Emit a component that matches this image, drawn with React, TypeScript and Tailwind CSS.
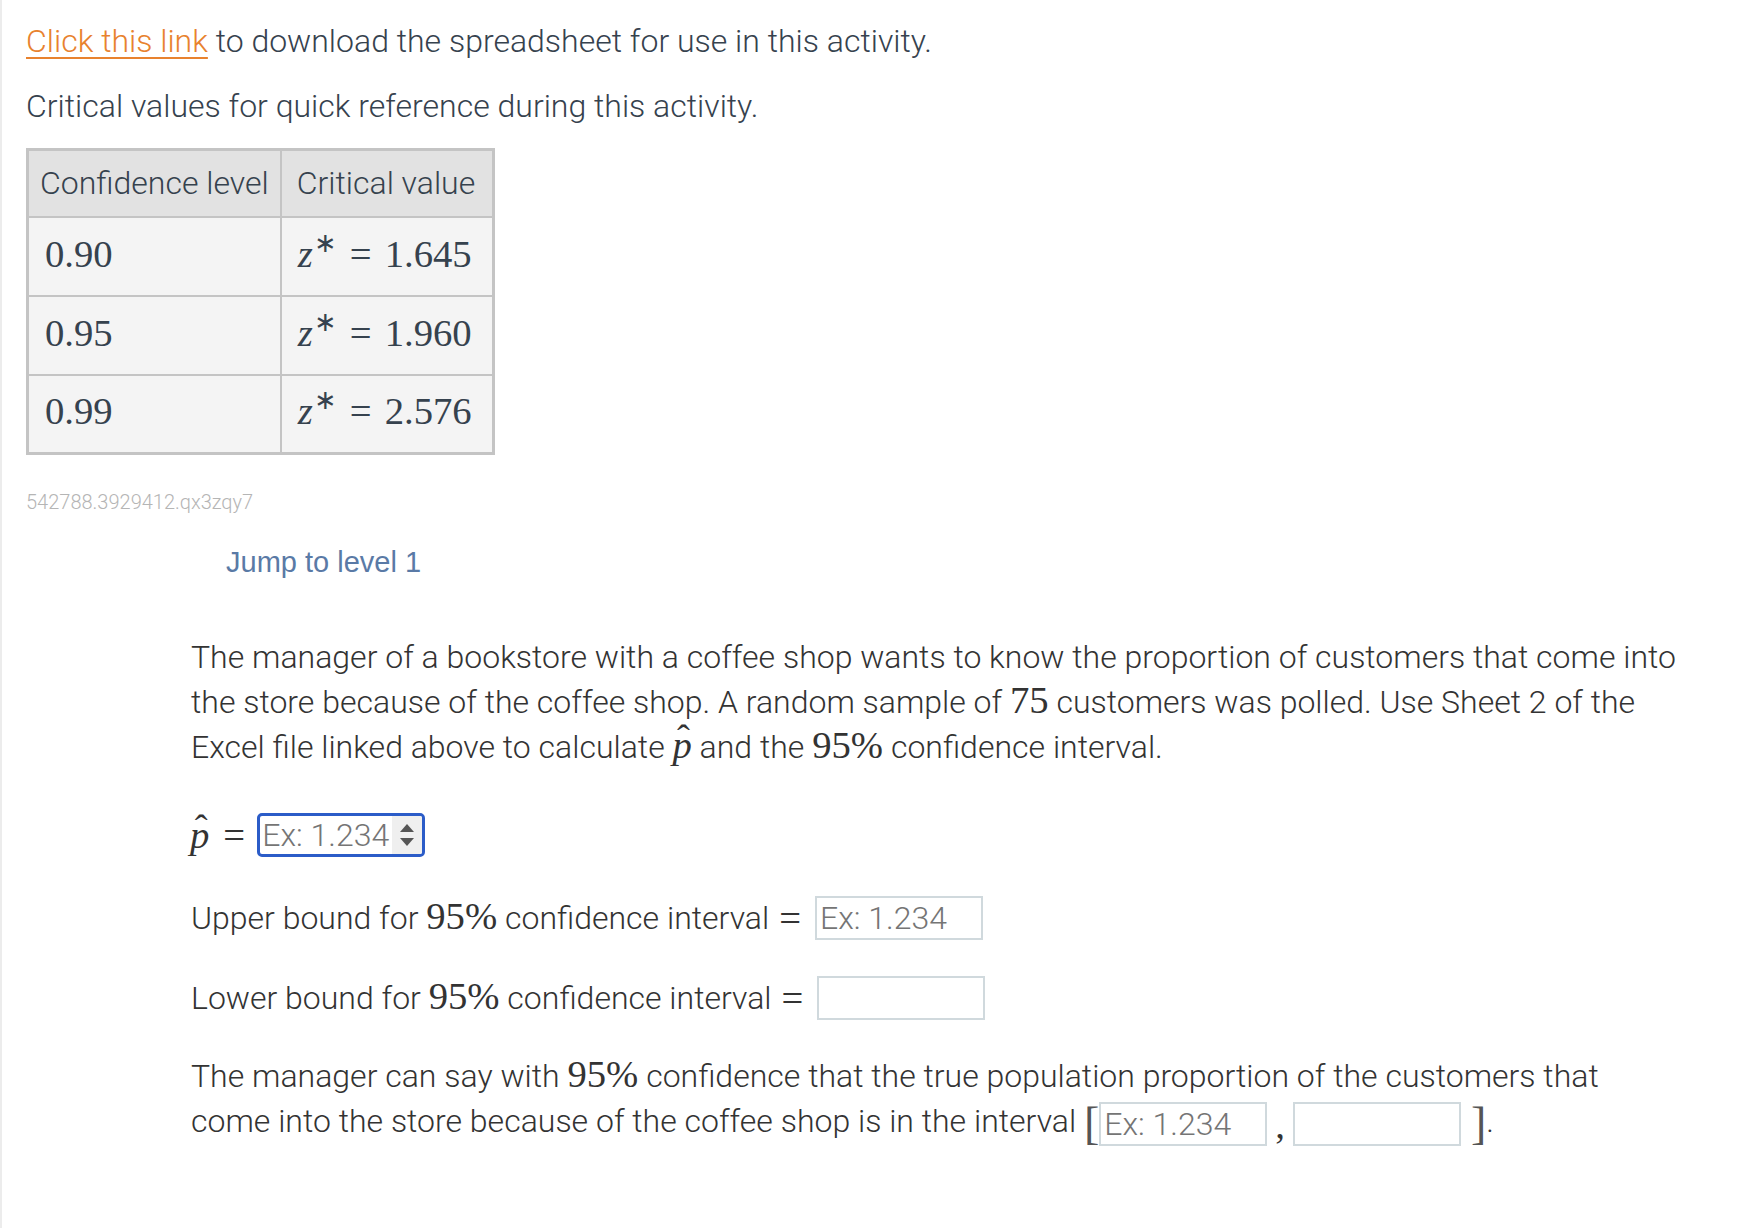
import React from 'react';

// Math pieces are set in a serif face, about 1.21x the body size (KaTeX style)
const M: React.FC<{ children: React.ReactNode; className?: string }> = ({ children, className = '' }) => (
  <span className={`font-['Liberation_Serif','Times_New_Roman',serif] text-[38.7px] font-normal leading-none ${className}`}>{children}</span>
);

const PHat = () => (
  <span className="relative inline-block italic">
    p
    <span className="absolute left-[0.12em] top-[-0.18em] not-italic">ˆ</span>
  </span>
);

const ZStar = () => (
  <span className="italic">
    z<sup className="not-italic text-[0.7em] top-[-0.55em] ml-[1px]">∗</sup>
  </span>
);

const rows = [
  { level: '0.90', value: '1.645' },
  { level: '0.95', value: '1.960' },
  { level: '0.99', value: '2.576' },
];

const Box: React.FC<{ placeholder?: string; className?: string }> = ({ placeholder = '', className = '' }) => (
  <input
    readOnly
    placeholder={placeholder}
    className={`inline-block align-middle h-[44px] w-[168px] border-2 border-[#d0d9dd] bg-white px-[3px] text-[32px] leading-[40px] text-[#333] placeholder:text-[#757575] outline-none ${className}`}
  />
);

export default function App() {
  return (
    <div className="min-h-screen bg-white border-l-2 border-[#ececec] pl-[24px] pt-[19px] pb-10 font-['Roboto',sans-serif] text-[32px] font-light leading-[45px] text-[#36424e]">
      <p>
        <a className="text-[#e8822e] underline decoration-2 underline-offset-[5px]">Click this link</a> to download the
        spreadsheet for use in this activity.
      </p>
      <p className="mt-[20px]">Critical values for quick reference during this activity.</p>

      <table className="mt-[19px] border-collapse border-[3px] border-[#c4c4c4]">
        <thead>
          <tr className="bg-[#e2e2e2]">
            <th className="h-[67px] w-[251px] border-2 border-[#c4c4c4] px-[11px] text-left font-light whitespace-nowrap">
              Confidence level
            </th>
            <th className="h-[67px] w-[213px] border-2 border-[#c4c4c4] px-[15px] text-left font-light whitespace-nowrap">
              Critical value
            </th>
          </tr>
        </thead>
        <tbody>
          {rows.map(r => (
            <tr key={r.level} className="bg-[#f4f4f4]">
              <td className="h-[79px] border-2 border-[#c4c4c4] px-[16px]">
                <M>{r.level}</M>
              </td>
              <td className="h-[79px] border-2 border-[#c4c4c4] px-[16px] whitespace-nowrap">
                <M>
                  <ZStar />
                  <span className="mx-[13px]">=</span>
                  {r.value}
                </M>
              </td>
            </tr>
          ))}
        </tbody>
      </table>

      <div className="mt-[33px] text-[20px] leading-[28px] text-[#b5b5b5]">542788.3929412.qx3zqy7</div>

      <div className="mt-[28px] ml-[200px] font-['Liberation_Sans',Arial,sans-serif] text-[29px] font-normal leading-[36px] text-[#5a7aa6]">
        Jump to level 1
      </div>

      <div className="mt-[55px] ml-[165px] text-[#333]">
        <p className="whitespace-nowrap">
          The manager of a bookstore with a coffee shop wants to know the proportion of customers that come into
          <br />
          the store because of the coffee shop. A random sample of <M>75</M> customers was polled. Use Sheet 2 of the
          <br />
          Excel file linked above to calculate <M><PHat /></M> and the <M>95%</M> confidence interval.
        </p>

        <div className="mt-[43px] flex h-[44px] items-center">
          <M className="ml-[-1px]">
            <PHat />
          </M>
          <M className="ml-[14px]">=</M>
          <div className="ml-[12px] flex h-[44px] w-[168px] overflow-hidden rounded-[5px] border-[3px] border-[#2b5cc8] bg-white">
            <span className="min-w-0 flex-1 overflow-hidden whitespace-nowrap pl-[2px] leading-[38px] text-[#757575]">Ex: 1.234</span>
            <span className="flex w-[30px] shrink-0 flex-col items-center justify-center gap-[6px] bg-[#efefef]">
              <svg width="14" height="8" viewBox="0 0 14 8">
                <path d="M7 0 L14 8 L0 8 Z" fill="#555" />
              </svg>
              <svg width="14" height="8" viewBox="0 0 14 8">
                <path d="M0 0 L14 0 L7 8 Z" fill="#555" />
              </svg>
            </span>
          </div>
        </div>

        <div className="mt-[39px] flex h-[44px] items-center whitespace-nowrap">
          <span>
            Upper bound for <M>95%</M> confidence interval
          </span>
          <M className="ml-[10px]">=</M>
          <Box placeholder="Ex: 1.234" className="ml-[14px]" />
        </div>

        <div className="mt-[36px] flex h-[44px] items-center whitespace-nowrap">
          <span>
            Lower bound for <M>95%</M> confidence interval
          </span>
          <M className="ml-[10px]">=</M>
          <Box className="ml-[14px]" />
        </div>

        <p className="mt-[34px] whitespace-nowrap">
          The manager can say with <M>95%</M> confidence that the true population proportion of the customers that
          <br />
          come into the store because of the coffee shop is in the interval{' '}
          <span className="inline-block align-middle font-['Liberation_Serif',serif] text-[46px] font-light leading-[44px] text-[#555]">[</span>
          <Box placeholder="Ex: 1.234" />
          <M className="mx-[8px] align-[-6px]">,</M>
          <Box />
          <span className="ml-[10px] inline-block align-middle font-['Liberation_Serif',serif] text-[46px] font-light leading-[44px] text-[#555]">]</span>
          <span>.</span>
        </p>
      </div>
    </div>
  );
}
